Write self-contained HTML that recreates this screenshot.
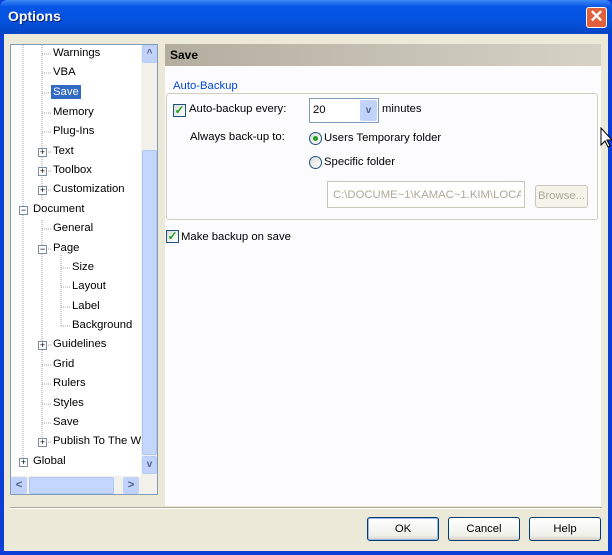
<!DOCTYPE html><html><head><style>
*{margin:0;padding:0;box-sizing:border-box}
body{width:612px;height:555px;overflow:hidden;font-family:"Liberation Sans",sans-serif;font-size:11.3px;color:#000;background:#0a3ed6;position:relative}
.a{position:absolute}
#title{left:0;top:0;width:612px;height:34px;background:linear-gradient(#3d8af7,#0755e6 20%,#0452df 60%,#0445c4);border-radius:7px 7px 0 0}
#client{left:4px;top:34px;width:604px;height:517px;background:#ece9d8}
.cb{width:13px;height:13px;border:1px solid #1c5180;background:linear-gradient(135deg,#dcdcd6,#fff)}
.rb{width:13px;height:13px;border:1px solid #1c5180;border-radius:50%;background:linear-gradient(135deg,#dcdcd6,#fff)}
.btn{height:24px;width:72px;border:1px solid #003c74;border-radius:3px;background:linear-gradient(#fff,#f0f0ea 80%,#d6d0c5);text-align:center;line-height:22px}
.t{white-space:nowrap}
.ex{width:9px;height:9px;border:1px solid #7a8ea8;background:#fff;font-size:9px;line-height:7px;text-align:center;color:#000}
</style></head><body>
<div id="title" class="a"></div>
<div class="a t" style="left:8px;top:8px;color:#fff;font-weight:bold;font-size:14px;text-shadow:1px 1px #0a1f6a">Options</div>
<div class="a" style="left:586px;top:7px;width:21px;height:21px;border:1px solid #fff;border-radius:3px;background:#e0603c;color:#fff;font-size:17px;line-height:18px;text-align:center;font-weight:bold">✕</div>
<div id="client" class="a"></div>
<div class="a" style="left:10px;top:44px;width:148px;height:451px;background:#fff;border:1px solid #7f9db9"></div>
<svg class="a" style="left:11px;top:45px" width="130" height="430">
<g stroke="#a0a0a0" stroke-dasharray="1,1" fill="none">
<line x1="12" y1="0" x2="12" y2="418"/>
<line x1="31" y1="0" x2="31" y2="155"/>
<line x1="31" y1="175" x2="31" y2="398"/>
<line x1="50" y1="210" x2="50" y2="282"/>
<path d="M31 9h10M31 28h10M31 48h10M31 68h10M31 87h10M31 107h10M31 126h10M31 145h10M12 165h6M31 184h10M31 204h10M50 223h10M50 242h10M50 262h10M50 281h10M31 300h10M31 320h10M31 339h10M31 359h10M31 378h10M31 397h10M12 417h6"/>
</g></svg>
<div class="a ex" style="left:38px;top:148px">+</div>
<div class="a ex" style="left:38px;top:167px">+</div>
<div class="a ex" style="left:38px;top:186px">+</div>
<div class="a ex" style="left:19px;top:206px">−</div>
<div class="a ex" style="left:38px;top:245px">−</div>
<div class="a ex" style="left:38px;top:341px">+</div>
<div class="a ex" style="left:38px;top:438px">+</div>
<div class="a ex" style="left:19px;top:458px">+</div>
<div class="a t" style="left:53px;top:47px">Warnings</div>
<div class="a t" style="left:53px;top:66px">VBA</div>
<div class="a t" style="left:51px;top:85px;background:#316ac5;color:#fff;padding:1px 2px">Save</div>
<div class="a t" style="left:53px;top:106px">Memory</div>
<div class="a t" style="left:53px;top:125px">Plug-Ins</div>
<div class="a t" style="left:53px;top:145px">Text</div>
<div class="a t" style="left:53px;top:164px">Toolbox</div>
<div class="a t" style="left:53px;top:183px">Customization</div>
<div class="a t" style="left:33px;top:203px">Document</div>
<div class="a t" style="left:53px;top:222px">General</div>
<div class="a t" style="left:53px;top:242px">Page</div>
<div class="a t" style="left:72px;top:261px">Size</div>
<div class="a t" style="left:72px;top:280px">Layout</div>
<div class="a t" style="left:72px;top:300px">Label</div>
<div class="a t" style="left:72px;top:319px">Background</div>
<div class="a t" style="left:53px;top:338px">Guidelines</div>
<div class="a t" style="left:53px;top:358px">Grid</div>
<div class="a t" style="left:53px;top:377px">Rulers</div>
<div class="a t" style="left:53px;top:397px">Styles</div>
<div class="a t" style="left:53px;top:416px">Save</div>
<div class="a t" style="left:53px;top:435px;width:88px;overflow:hidden">Publish To The Web</div>
<div class="a t" style="left:33px;top:455px">Global</div>
<div class="a" style="left:141px;top:45px;width:16px;height:431px;background:#f3f1ec"></div>
<div class="a" style="left:142px;top:45px;width:15px;height:18px;background:#c1d3fb;border:1px solid #b8cdf5;border-radius:2px;color:#4d6185;text-align:center;font-size:10px;line-height:16px;font-weight:bold">^</div>
<div class="a" style="left:142px;top:150px;width:15px;height:305px;background:#c4d6fb;border:1px solid #b0c6f2;border-radius:2px"></div>
<div class="a" style="left:142px;top:456px;width:15px;height:18px;background:#c1d3fb;border:1px solid #b8cdf5;border-radius:2px;color:#4d6185;text-align:center;font-size:10px;line-height:16px;font-weight:bold">v</div>
<div class="a" style="left:11px;top:476px;width:146px;height:18px;background:#f3f1ec"></div>
<div class="a" style="left:11px;top:477px;width:16px;height:17px;background:#c1d3fb;border-radius:2px;color:#4d6185;text-align:center;font-weight:bold;line-height:16px">&lt;</div>
<div class="a" style="left:29px;top:477px;width:85px;height:17px;background:#c4d6fb;border:1px solid #b0c6f2;border-radius:2px"></div>
<div class="a" style="left:123px;top:477px;width:16px;height:17px;background:#c1d3fb;border-radius:2px;color:#4d6185;text-align:center;font-weight:bold;line-height:16px">&gt;</div>
<div class="a" style="left:165px;top:44px;width:436px;height:462px;background:#fcfcfe"></div>
<div class="a" style="left:165px;top:44px;width:436px;height:22px;background:linear-gradient(90deg,#b2ad9f,#d6d3c6)"></div>
<div class="a t" style="left:170px;top:48px;font-weight:bold;font-size:12px">Save</div>
<div class="a" style="left:166px;top:93px;width:432px;height:127px;border:1px solid #d0d0bf;border-radius:3px"></div>
<div class="a t" style="left:171px;top:80px;color:#0046d5;background:#fcfcfe;padding:0 2px">Auto-Backup</div>
<div class="a cb" style="left:173px;top:104px;color:#21a121;font-size:12px;line-height:11px;text-align:center;font-weight:bold">✓</div>
<div class="a t" style="left:189px;top:103px">Auto-backup every:</div>
<div class="a" style="left:309px;top:98px;width:70px;height:25px;border:1px solid #7f9db9;background:#fff"></div>
<div class="a t" style="left:313px;top:104px">20</div>
<div class="a" style="left:360px;top:100px;width:17px;height:21px;background:#c1d3fb;border-radius:2px;color:#4d6185;font-size:10px;text-align:center;line-height:21px;font-weight:bold">v</div>
<div class="a t" style="left:382px;top:103px">minutes</div>
<div class="a t" style="left:190px;top:131px">Always back-up to:</div>
<div class="a rb" style="left:309px;top:132px"><div style="position:absolute;left:3px;top:3px;width:5px;height:5px;border-radius:50%;background:#21a121"></div></div>
<div class="a t" style="left:324px;top:132px">Users Temporary folder</div>
<div class="a rb" style="left:309px;top:156px"></div>
<div class="a t" style="left:324px;top:156px">Specific folder</div>
<div class="a" style="left:327px;top:181px;width:198px;height:27px;border:1px solid #c9c7ba;background:#fff"></div>
<div class="a t" style="left:333px;top:189px;color:#aca899;width:188px;overflow:hidden">C:\DOCUME~1\KAMAC~1.KIM\LOCALSETTINGS</div>
<div class="a" style="left:535px;top:185px;width:53px;height:23px;border:1px solid #c9c7ba;border-radius:3px;background:#f5f4ea;color:#aca899;text-align:center;line-height:21px">Browse...</div>
<div class="a cb" style="left:166px;top:230px;color:#21a121;font-size:12px;line-height:11px;text-align:center;font-weight:bold">✓</div>
<div class="a t" style="left:181px;top:231px">Make backup on save</div>
<div class="a" style="left:10px;top:507px;width:592px;height:1px;background:#aca899"></div>
<div class="a" style="left:10px;top:508px;width:592px;height:1px;background:#fff"></div>
<div class="a btn" style="left:367px;top:517px;box-shadow:inset 0 0 0 1px #98b8ea">OK</div>
<div class="a btn" style="left:448px;top:517px">Cancel</div>
<div class="a btn" style="left:529px;top:517px">Help</div>
<svg class="a" style="left:600px;top:127px" width="12" height="22"><path d="M1 1v17l4-4 3 6 2-1-3-6h5z" fill="#fff" stroke="#000"/></svg>
</body></html>
